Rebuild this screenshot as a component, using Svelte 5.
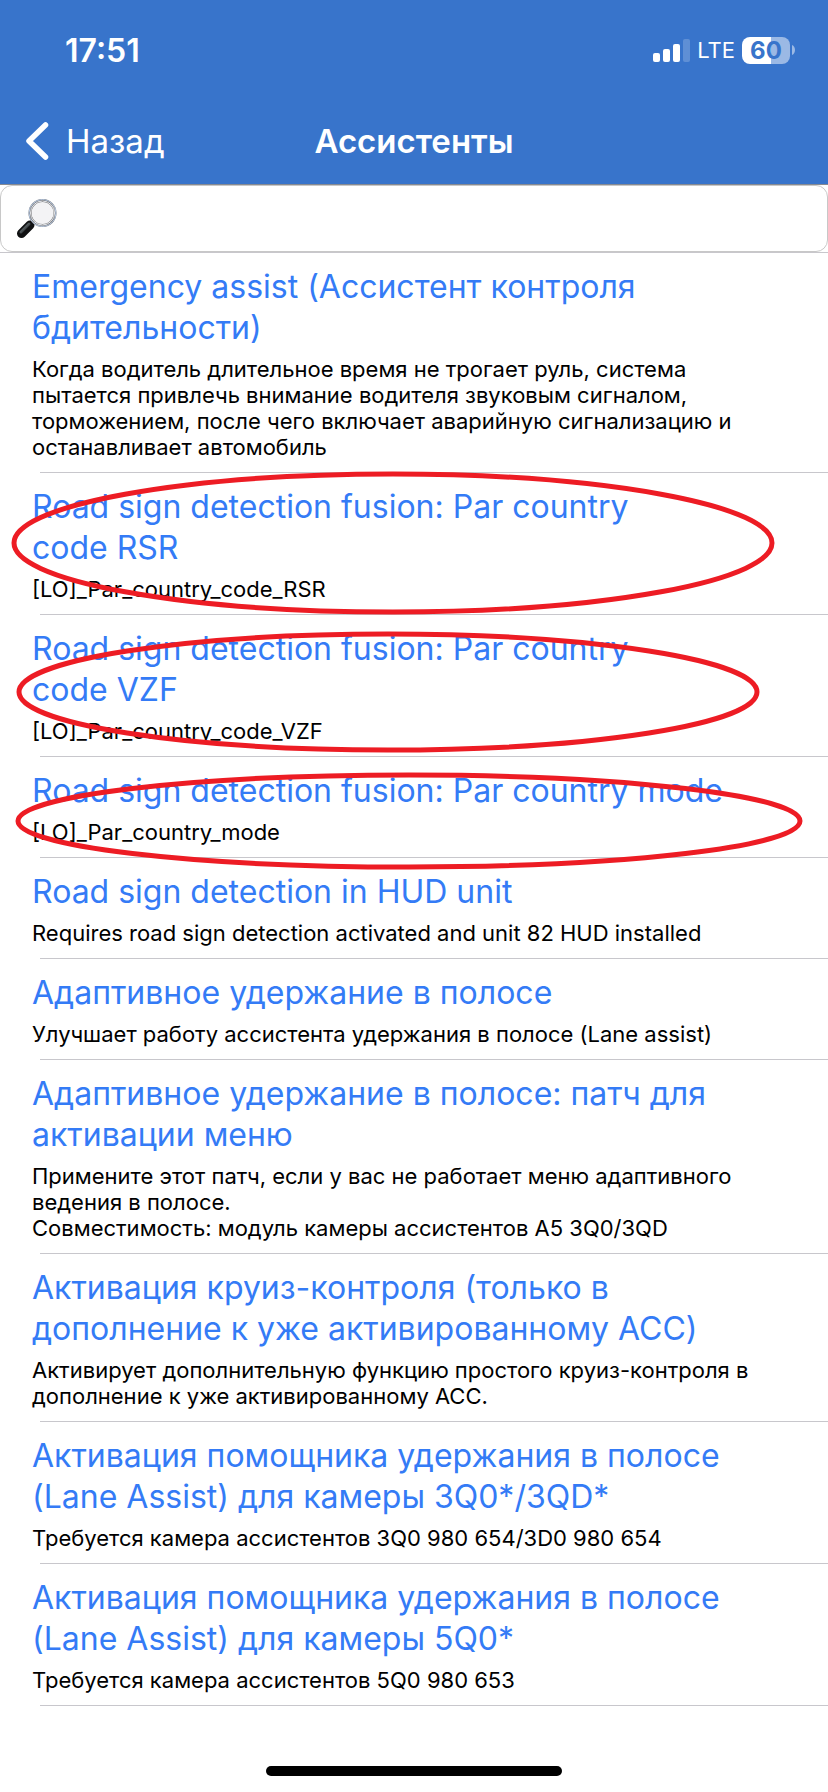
<script>
    let query = '';

    const items = [
        {
            title: 'Emergency assist (Ассистент контроля\nбдительности)',
            text: 'Когда водитель длительное время не трогает руль, система\nпытается привлечь внимание водителя звуковым сигналом,\nторможением, после чего включает аварийную сигнализацию и\nостанавливает автомобиль'
        },
        {
            title: 'Road sign detection fusion: Par country\ncode RSR',
            text: '[LO]_Par_country_code_RSR'
        },
        {
            title: 'Road sign detection fusion: Par country\ncode VZF',
            text: '[LO]_Par_country_code_VZF'
        },
        {
            title: 'Road sign detection fusion: Par country mode',
            text: '[LO]_Par_country_mode'
        },
        {
            title: 'Road sign detection in HUD unit',
            text: 'Requires road sign detection activated and unit 82 HUD installed'
        },
        {
            title: 'Адаптивное удержание в полосе',
            text: 'Улучшает работу ассистента удержания в полосе (Lane assist)'
        },
        {
            title: 'Адаптивное удержание в полосе: патч для\nактивации меню',
            text: 'Примените этот патч, если у вас не работает меню адаптивного\nведения в полосе.\nСовместимость: модуль камеры ассистентов A5 3Q0/3QD'
        },
        {
            title: 'Активация круиз-контроля (только в\nдополнение к уже активированному ACC)',
            text: 'Активирует дополнительную функцию простого круиз-контроля в\nдополнение к уже активированному ACC.'
        },
        {
            title: 'Активация помощника удержания в полосе\n(Lane Assist) для камеры 3Q0*/3QD*',
            text: 'Требуется камера ассистентов 3Q0 980 654/3D0 980 654'
        },
        {
            title: 'Активация помощника удержания в полосе\n(Lane Assist) для камеры 5Q0*',
            text: 'Требуется камера ассистентов 5Q0 980 653'
        }
    ];

    // hand-drawn marks over the list
    const marks = [
        { cx: 393, cy: 290, rx: 379, ry: 69 },
        { cx: 388, cy: 439, rx: 369, ry: 58 },
        { cx: 409, cy: 568, rx: 391, ry: 46 }
    ];
</script>

<div class="screen">
    <header>
        <div class="status">
            <span class="time">17:51</span>
            <div class="indicators">
                <svg class="signal" width="37" height="23" viewBox="0 0 37 23" fill="#fff" aria-hidden="true">
                    <rect x="0" y="14" width="7" height="9" rx="2" />
                    <rect x="10" y="10" width="7" height="13" rx="2" />
                    <rect x="20" y="5" width="7" height="18" rx="2" />
                    <rect x="30" y="0" width="7" height="23" rx="2" opacity="0.2" />
                </svg>
                <span class="network">LTE</span>
                <div class="battery">
                    <span class="level">60</span>
                    <svg width="3" height="10" viewBox="0 0 3 10" aria-hidden="true">
                        <path d="M0 0C4 1.500 4 8.500 0 10z" fill="#9bb9e5" />
                    </svg>
                </div>
            </div>
        </div>
        <nav>
            <button class="back">
                <svg width="23" height="38" viewBox="0 0 23 38" fill="none" aria-hidden="true">
                    <path d="M19.500 3L3 19l16.500 16" stroke="#fff" stroke-width="5.500" stroke-linecap="round" stroke-linejoin="round" />
                </svg>
                Назад
            </button>
            <h1>Ассистенты</h1>
        </nav>
    </header>

    <label class="search">
        <svg width="41" height="42" viewBox="0 0 41 42" aria-hidden="true">
            <defs>
                <linearGradient id="rim" x1="0" y1="0" x2="1" y2="1">
                    <stop offset="0" stop-color="#8d9299" />
                    <stop offset="0.300" stop-color="#5d5d60" />
                    <stop offset="0.650" stop-color="#8d8d8f" />
                    <stop offset="1" stop-color="#55565a" />
                </linearGradient>
                <linearGradient id="grip" x1="0" y1="0" x2="1" y2="1">
                    <stop offset="0" stop-color="#17191a" />
                    <stop offset="0.450" stop-color="#535b5e" />
                    <stop offset="1" stop-color="#050505" />
                </linearGradient>
            </defs>
            <path d="M17 23.500l-4 4" stroke="#77797b" stroke-width="4" />
            <path d="M5.500 35.500l8.500-8.500" stroke="#101112" stroke-width="9" stroke-linecap="round" />
            <path d="M5 34l8-8" stroke="url(#grip)" stroke-width="3" stroke-linecap="round" />
            <circle cx="26.500" cy="15" r="12.500" fill="#f3f3f5" stroke="url(#rim)" stroke-width="3" />
            <circle cx="26.500" cy="15" r="13.500" fill="none" stroke="#b9cbe4" stroke-width="1" />
            <circle cx="26.500" cy="15" r="12" fill="none" stroke="#e9ebee" stroke-width="1" />
        </svg>
        <input type="text" aria-label="Поиск" bind:value={query} />
    </label>

    <main>
        <ul>
            {#each items as item}
                <li>
                    <a href="#top">{item.title}</a>
                    <p>{item.text}</p>
                </li>
            {/each}
        </ul>
        <svg class="marks" aria-hidden="true">
            {#each marks as mark}
                <ellipse cx={mark.cx} cy={mark.cy} rx={mark.rx} ry={mark.ry} />
            {/each}
        </svg>
    </main>

    <div class="home"></div>
</div>

<style>
    :global(body) {
        background: #fff;
    }

    .screen {
        display: flex;
        flex-direction: column;
        min-height: 100vh;
        font-family: Inter, 'Liberation Sans', sans-serif;
        color: #000;
    }

    header {
        background: #3874cb;
        color: #fff;
        border-bottom: 1px solid #868a92;
    }

    .status {
        display: flex;
        align-items: center;
        justify-content: space-between;
        height: 100px;
        padding: 0 33px 0 65px;
    }

    .time {
        font-size: 32px;
        font-weight: 600;
    }

    .indicators {
        display: flex;
        align-items: center;
        gap: 7px;
    }

    .network {
        font-size: 22px;
        line-height: 26px;
    }

    .battery {
        display: flex;
        align-items: center;
        gap: 2px;
    }

    .level {
        width: 48px;
        border-radius: 8px;
        background: linear-gradient(to right, #fff 60%, #9bb9e5 60%);
        color: #3874cb;
        font-size: 24px;
        font-weight: 700;
        line-height: 27px;
        text-align: center;
    }

    nav {
        display: grid;
        grid-template-columns: 1fr auto 1fr;
        align-items: center;
        height: 81px;
        padding: 0 26px 3px;
    }

    .back {
        display: flex;
        align-items: center;
        gap: 17px;
        padding: 0;
        border: none;
        background: none;
        color: #fff;
        font-family: inherit;
        font-size: 33px;
        cursor: pointer;
    }

    h1 {
        margin: 0;
        font-size: 33px;
        font-weight: 600;
    }

    .search {
        display: flex;
        align-items: center;
        gap: 12px;
        height: 65px;
        padding: 0 15px;
        border: 1px solid #c8c8c8;
        border-radius: 12px;
    }

    .search input {
        flex: 1;
        min-width: 0;
        border: none;
        outline: none;
        background: none;
        font-family: inherit;
        font-size: 32px;
    }

    main {
        position: relative;
        border-top: 1px solid #c8c7cc;
    }

    ul {
        margin: 0;
        padding: 0;
        list-style: none;
    }

    li {
        padding-top: 13px;
    }

    li::after {
        content: '';
        display: block;
        height: 1px;
        margin: 12px 0 0 40px;
        background: #c8c7cc;
    }

    li a {
        display: block;
        padding: 0 32px;
        color: #347bf6;
        font-size: 32px;
        line-height: 41px;
        text-decoration: none;
        white-space: pre-line;
    }

    li p {
        margin: 8px 0 0;
        padding: 0 32px;
        font-size: 22px;
        line-height: 26px;
        white-space: pre-line;
    }

    .marks {
        position: absolute;
        top: 0;
        left: 0;
        width: 100%;
        height: 100%;
        fill: none;
        stroke: #ed1c24;
        stroke-width: 5;
        pointer-events: none;
    }

    .home {
        width: 296px;
        height: 10px;
        margin: auto auto 16px;
        border-radius: 5px;
        background: #000;
    }
</style>
